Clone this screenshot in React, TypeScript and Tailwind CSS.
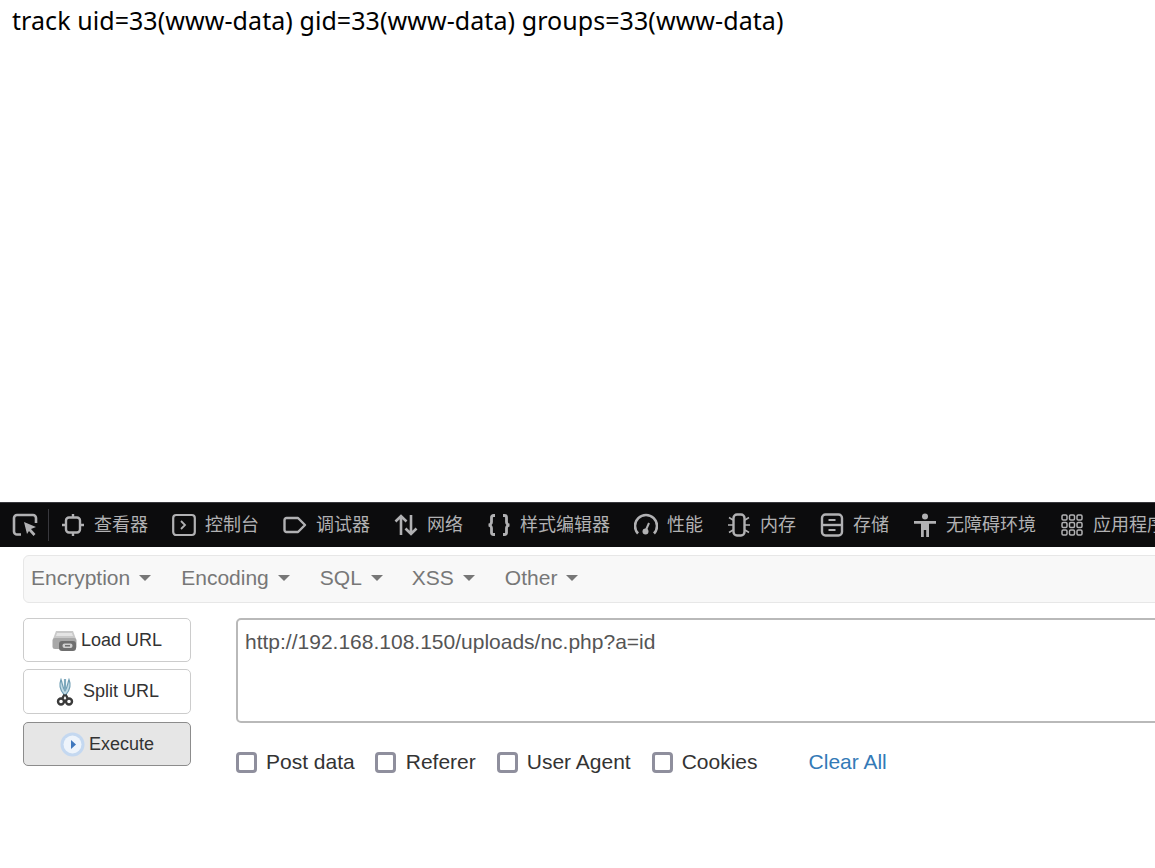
const tabs = [
  { label: "查看器", icon: <InspectorIcon /> },
  { label: "控制台", icon: <ConsoleIcon /> },
  { label: "调试器", icon: <DebuggerIcon /> },
  { label: "网络", icon: <NetworkIcon /> },
  { label: "样式编辑器", icon: <BracesIcon /> },
  { label: "性能", icon: <GaugeIcon /> },
  { label: "内存", icon: <ChipIcon /> },
  { label: "存储", icon: <StorageIcon /> },
  { label: "无障碍环境", icon: <PersonIcon /> },
  { label: "应用程序", icon: <GridIcon /> },
];

const menus = [
  { label: "Encryption", cls: "mr-[30px]" },
  { label: "Encoding", cls: "mr-[30px]" },
  { label: "SQL", cls: "mr-[29px]" },
  { label: "XSS", cls: "mr-[30px]" },
  { label: "Other", cls: "mr-[30px]" },
];
const checks = [
  { label: "Post data", cls: "mr-[20px] gap-[9px]" },
  { label: "Referer", cls: "mr-[21px] gap-[10px]" },
  { label: "User Agent", cls: "mr-[21px] gap-[9px]" },
  { label: "Cookies", cls: "mr-[51px] gap-[9px]" },
];

function PickIcon() {
  return (
    <svg className="shrink-0" width="26" height="26" viewBox="0 0 26 26" fill="none" stroke="#b1b1b3" strokeWidth="2.6">
      <path d="M9 22.500H5a3 3 0 0 1-3-3V6a3 3 0 0 1 3-3h16a3 3 0 0 1 3 3v5" />
      <path d="M12 10l12 5-5 2 4.500 5-2 2-4.500-5-2 3z" fill="#b1b1b3" stroke="none" />
    </svg>
  );
}

function InspectorIcon() {
  return (
    <svg width="24" height="24" viewBox="0 0 24 24" fill="none" stroke="#b1b1b3" strokeWidth="2.4">
      <rect x="5" y="4.500" width="14" height="15" rx="3" />
      <path d="M12 1v3.500M12 19.500V23M1 12h4M19 12h4" />
    </svg>
  );
}

function ConsoleIcon() {
  return (
    <svg width="24" height="24" viewBox="0 0 24 24" fill="none" stroke="#b1b1b3" strokeWidth="2.2">
      <rect x="1.200" y="2" width="21.600" height="20" rx="3" />
      <path d="M9 8l4 4-4 4" strokeWidth="1.800" />
    </svg>
  );
}

function DebuggerIcon() {
  return (
    <svg width="24" height="24" viewBox="0 0 24 24" fill="none" stroke="#b1b1b3" strokeWidth="2.400">
      <path d="M3.500 5h11.500l7 7-7 7H3.500a2 2 0 0 1-2-2V7a2 2 0 0 1 2-2z" strokeLinejoin="round" />
    </svg>
  );
}

function NetworkIcon() {
  return (
    <svg width="24" height="24" viewBox="0 0 24 24" fill="none" stroke="#b1b1b3" strokeWidth="2.600">
      <path d="M7 22V3M1.500 8.500L7 3l5.500 5.500M17 2v19M11.500 15.500L17 21l5.500-5.500" />
    </svg>
  );
}

function BracesIcon() {
  return (
    <svg width="24" height="24" viewBox="0 0 24 24" fill="none" stroke="#b1b1b3" strokeWidth="2.800">
      <path d="M8 2.500H6.500a2 2 0 0 0-2 2V9a3 3 0 0 1-3 3 3 3 0 0 1 3 3v4.500a2 2 0 0 0 2 2H8" />
      <path d="M16 2.500h1.500a2 2 0 0 1 2 2V9a3 3 0 0 0 3 3 3 3 0 0 0-3 3v4.500a2 2 0 0 1-2 2H16" />
    </svg>
  );
}

function GaugeIcon() {
  return (
    <svg width="24" height="24" viewBox="0 0 24 24" fill="none" stroke="#b1b1b3" strokeWidth="2.600">
      <path d="M4 20.500A11 11 0 1 1 20 20.500" />
      <path d="M11.500 18L15 10" strokeWidth="2" />
      <circle cx="11.500" cy="18.500" r="3" fill="#b1b1b3" stroke="none" />
    </svg>
  );
}

function ChipIcon() {
  return (
    <svg width="24" height="24" viewBox="0 0 24 24" fill="none" stroke="#b1b1b3" strokeWidth="2.400">
      <rect x="6.500" y="1.500" width="11" height="21" rx="3.500" />
      <path d="M6 7L2 4.500M6 12H1M6 17l-4 2.500M18 7l4-2.500M18 12h5M18 17l4 2.500" strokeWidth="1.500" />
    </svg>
  );
}

function StorageIcon() {
  return (
    <svg width="24" height="24" viewBox="0 0 24 24" fill="none" stroke="#b1b1b3" strokeWidth="2.400">
      <rect x="2" y="1.500" width="20" height="21" rx="3.500" />
      <path d="M2 12h20" />
      <path d="M8.500 7h7M8.500 17h7" strokeWidth="2" />
    </svg>
  );
}

function PersonIcon() {
  return (
    <svg width="24" height="24" viewBox="0 0 24 24" fill="#b1b1b3">
      <circle cx="12" cy="3.500" r="3" />
      <path d="M1 8h22v2.800h-7V24h-2.800v-7h-2.400v7H8V10.800H1z" />
    </svg>
  );
}

function GridIcon() {
  return (
    <svg width="24" height="24" viewBox="0 0 24 24" fill="none" stroke="#b1b1b3" strokeWidth="1.500">
      {[2, 9.500, 17].map((y) =>
        [2, 9.500, 17].map((x) => <rect key={`${x}-${y}`} x={x} y={y} width="5" height="5" rx="1.200" />),
      )}
    </svg>
  );
}

function LoadIcon() {
  return (
    <svg width="25" height="25" viewBox="0 0 25 25">
      <path d="M4 3h17l3 8H1z" fill="#c9c9c9" />
      <path d="M5 5h15l1 3H4z" fill="#e4e4e4" />
      <rect x="0.500" y="10" width="24" height="11" rx="2.500" fill="#a8a8a8" />
      <rect x="7" y="13" width="17" height="10" rx="3" fill="#6f6f6f" />
      <rect x="10.500" y="15.500" width="10" height="4.500" rx="2" fill="#cfcfcf" />
      <rect x="13" y="17" width="5" height="1.500" fill="#6f6f6f" />
    </svg>
  );
}

function ScissorsIcon() {
  return (
    <svg width="20" height="30" viewBox="0 0 20 30" fill="none">
      <path d="M6 2.500c-2 5-1.500 10 3 15h2c4.500-5 5-10 3-15-1.500 4-1.500 8-4 11.500-2.500-3.500-2.500-7.500-4-11.500z" fill="#c3dbe6" stroke="#6f9db3" strokeWidth="1.200" />
      <path d="M10 2v12" stroke="#7fa9bd" strokeWidth="2.200" />
      <circle cx="6" cy="24.500" r="3" stroke="#3a3a3a" strokeWidth="2.400" />
      <circle cx="14" cy="24.500" r="3" stroke="#3a3a3a" strokeWidth="2.400" />
      <path d="M7.500 21l2-3.500M12.500 21l-2-3.500" stroke="#3a3a3a" strokeWidth="2.400" />
    </svg>
  );
}

function ExecuteIcon() {
  return (
    <svg width="25" height="25" viewBox="0 0 25 25">
      <circle cx="12.500" cy="12.500" r="12" fill="#c4d8f0" />
      <circle cx="12.500" cy="12.500" r="9" fill="#eef4fb" />
      <path d="M11 8l5 4.500-5 4.500z" fill="#3f77bd" />
    </svg>
  );
}

function Caret() {
  return <span className="ml-[9px] inline-block border-x-[6px] border-t-[6px] border-x-transparent border-t-[#777]" />;
}

export default function App() {
  return (
    <div className="h-[868px] w-[1155px] overflow-hidden bg-white font-['Liberation_Sans',sans-serif]">
      <div className="h-[502px] pl-3 pt-[2px] font-['Noto_Sans',sans-serif] text-[25px] leading-[36px] tracking-[0.07px] text-black">
        track uid=33(www-data) gid=33(www-data) groups=33(www-data)
      </div>

      <div className="flex h-[45px] items-center overflow-hidden whitespace-nowrap border-t border-[#38383d] bg-[#0c0c0d] pl-3 font-['Noto_Sans_CJK_SC',sans-serif] text-[18px] text-[#b1b1b3]">
        <PickIcon />
        <span className="ml-[10px] mr-[12px] h-[32px] w-px shrink-0 bg-[#38383d]" />
        <div className="flex items-center gap-6">
          {tabs.map((tab) => (
            <div key={tab.label} className="flex shrink-0 items-center gap-[9px]">
              {tab.icon}
              <span className="pb-[3px]">{tab.label}</span>
            </div>
          ))}
        </div>
      </div>

      <div className="ml-[23px] mt-2 flex h-[48px] w-[1200px] items-center rounded-[6px] border border-[#e7e7e7] bg-[#f8f8f8] pb-[3px] pl-[7px] text-[21px] text-[#777]">
        {menus.map((menu) => (
          <div key={menu.label} className={`flex items-center ${menu.cls}`}>
            {menu.label}
            <Caret />
          </div>
        ))}
      </div>

      <div className="ml-[23px] mt-[15px] flex w-[1200px] items-start">
        <div className="flex w-[168px] shrink-0 flex-col text-[18px] text-[#333]">
          <button className="flex h-[44px] items-center justify-center gap-[4px] rounded-[5px] border border-[#ccc] bg-white">
            <LoadIcon />
            Load URL
          </button>
          <button className="mt-[7px] flex h-[45px] items-center justify-center gap-[8px] rounded-[5px] border border-[#ccc] bg-white">
            <ScissorsIcon />
            Split URL
          </button>
          <button className="mt-2 flex h-[44px] items-center justify-center gap-[4px] rounded-[5px] border border-[#8c8c8c] bg-[#e6e6e6]">
            <ExecuteIcon />
            Execute
          </button>
        </div>

        <div className="ml-[45px] flex-1">
          <div className="h-[105px] rounded-[5px] border-2 border-[#b9b9b9] bg-white px-[7px] py-[4px] text-[21px] leading-[36px] text-[#555]">
            http://192.168.108.150/uploads/nc.php?a=id
          </div>
          <div className="mt-[23px] flex items-center text-[21px] text-[#333]">
            {checks.map((check) => (
              <label key={check.label} className={`flex items-center ${check.cls}`}>
                <span className="mt-[2px] h-[21px] w-[21px] rounded-[4px] border-[3px] border-[#8f8f9d] bg-white" />
                {check.label}
              </label>
            ))}
            <span className="text-[#337ab7]">Clear All</span>
          </div>
        </div>
      </div>
    </div>
  );
}
